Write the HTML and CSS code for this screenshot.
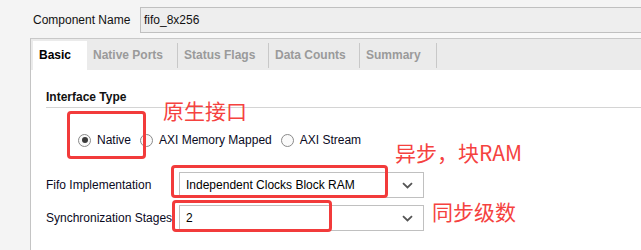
FILE: index.html
```html
<!DOCTYPE html>
<html>
<head>
<meta charset="utf-8">
<link rel="stylesheet" href="styles.css">
</head>
<body>
<div class="page">
  <div class="top-strip"></div>
  <div class="name-row">
    <span class="name-label">Component Name</span>
    <div class="name-input">fifo_8x256</div>
  </div>
  <div class="gap-strip"></div>
  <div class="panel">
    <div class="tabs">
      <div class="tab active">Basic</div>
      <div class="tab">Native Ports</div><span class="sep"></span>
      <div class="tab">Status Flags</div><span class="sep"></span>
      <div class="tab">Data Counts</div><span class="sep"></span>
      <div class="tab short">Summary</div><span class="sep"></span>
    </div>
    <div class="content">
      <div class="section-title">Interface Type</div>
      <div class="radios">
        <label class="radio"><span class="circle checked"></span>Native</label>
        <label class="radio"><span class="circle"></span>AXI Memory Mapped</label>
        <label class="radio"><span class="circle"></span>AXI Stream</label>
      </div>
      <div class="form">
        <span class="label">Fifo Implementation</span>
        <div class="select"><span>Independent Clocks Block RAM</span><svg class="chev" width="11" height="7" viewBox="0 0 11 7"><path d="M1 1.2 L5.5 5.5 L10 1.2" fill="none" stroke="#555" stroke-width="1.8"/></svg></div>
        <span class="label">Synchronization Stages</span>
        <div class="select"><span>2</span><svg class="chev" width="11" height="7" viewBox="0 0 11 7"><path d="M1 1.2 L5.5 5.5 L10 1.2" fill="none" stroke="#555" stroke-width="1.8"/></svg></div>
      </div>
    </div>
  </div>

  <div class="mark box1"></div>
  <div class="mark box2"></div>
  <div class="mark box3"></div>
  <div class="note note1">原生接口</div>
  <div class="note note2">异步，块RAM</div>
  <div class="note note3">同步级数</div>
</div>
</body>
</html>
```

FILE: styles.css
```css
html, body {
  margin: 0;
  padding: 0;
}
body {
  width: 641px;
  height: 250px;
  overflow: hidden;
  background: #f4f4f4;
  font-family: "Liberation Sans", Arial, sans-serif;
  font-size: 12px;
  color: #111;
}
.page {
  position: relative;
  width: 641px;
  height: 250px;
  overflow: hidden;
}
.top-strip {
  height: 7px;
}
.name-row {
  display: flex;
  align-items: center;
  height: 26px;
}
.name-label {
  margin-left: 33px;
  width: 107px;
}
.name-input {
  box-sizing: border-box;
  align-self: stretch;
  flex: 1;
  display: flex;
  align-items: center;
  padding-left: 3px;
  border: 1px solid #c0c0c0;
  border-right: none;
  background: #eeeeee;
}
.gap-strip {
  height: 5px;
  background: #f8f8f8;
  margin-left: 140px;
}
.panel {
  margin-left: 30px;
  border-left: 1px solid #c4c4c4;
  border-top: 1px solid #c8c8c8;
  height: 220px;
  background: #ffffff;
}
.tabs {
  display: flex;
  align-items: flex-end;
  height: 31px;
  background: #ebebeb;
  padding-left: 2px;
}
.tab {
  box-sizing: border-box;
  width: 90px;
  height: 29px;
  line-height: 29px;
  padding-left: 6px;
  font-weight: bold;
  color: #9a9a9a;
  white-space: nowrap;
}
.tab.short {
  width: 76px;
}
.tab.active {
  width: 54px;
  background: #ffffff;
  color: #000;
}
.sep {
  width: 1px;
  height: 25px;
  align-self: center;
  margin-top: 2px;
  background: #c8c8c8;
}
.content {
  padding: 20px 0 0 15px;
}
.section-title {
  font-weight: bold;
  line-height: 14px;
  padding-bottom: 3px;
  border-bottom: 1px solid #d4d4d4;
}
.radios {
  display: flex;
  align-items: center;
  height: 16px;
  margin: 24px 0 0 32px;
  gap: 9px;
}
.radio {
  display: flex;
  align-items: center;
  gap: 6px;
  color: #0a0a1e;
}
.circle {
  box-sizing: border-box;
  width: 13px;
  height: 13px;
  border: 1px solid #8a8a8a;
  border-radius: 50%;
  background: #fafafa;
  display: flex;
  align-items: center;
  justify-content: center;
}
.circle.checked::before {
  content: "";
  width: 6px;
  height: 6px;
  border-radius: 50%;
  background: #3a3a3a;
}
.form {
  display: grid;
  grid-template-columns: 133px 245px;
  grid-auto-rows: 26px;
  row-gap: 7px;
  margin-top: 24px;
  align-items: center;
}
.label {
  color: #0a0a1e;
}
.select {
  box-sizing: border-box;
  height: 26px;
  border: 1px solid #c0c0c0;
  background: #fff;
  display: flex;
  align-items: center;
  justify-content: space-between;
  padding: 0 10px 0 6px;
  color: #000;
}
.chev {
  display: block;
}
.mark {
  position: absolute;
  box-sizing: border-box;
  border: 3px solid #f23b3b;
  border-radius: 4px;
}
.box1 { left: 67px; top: 111px; width: 79px; height: 48px; }
.box2 { left: 171px; top: 165px; width: 217px; height: 33px; }
.box3 { left: 172px; top: 200px; width: 160px; height: 32px; }
.note {
  position: absolute;
  font-family: "Noto Sans CJK SC", "Noto Sans", sans-serif;
  font-size: 21px;
  line-height: 21px;
  color: #f5423f;
  white-space: nowrap;
}
.note1 { left: 163px; top: 100px; }
.note2 { left: 395px; top: 142px; }
.note3 { left: 432px; top: 201px; }
```
